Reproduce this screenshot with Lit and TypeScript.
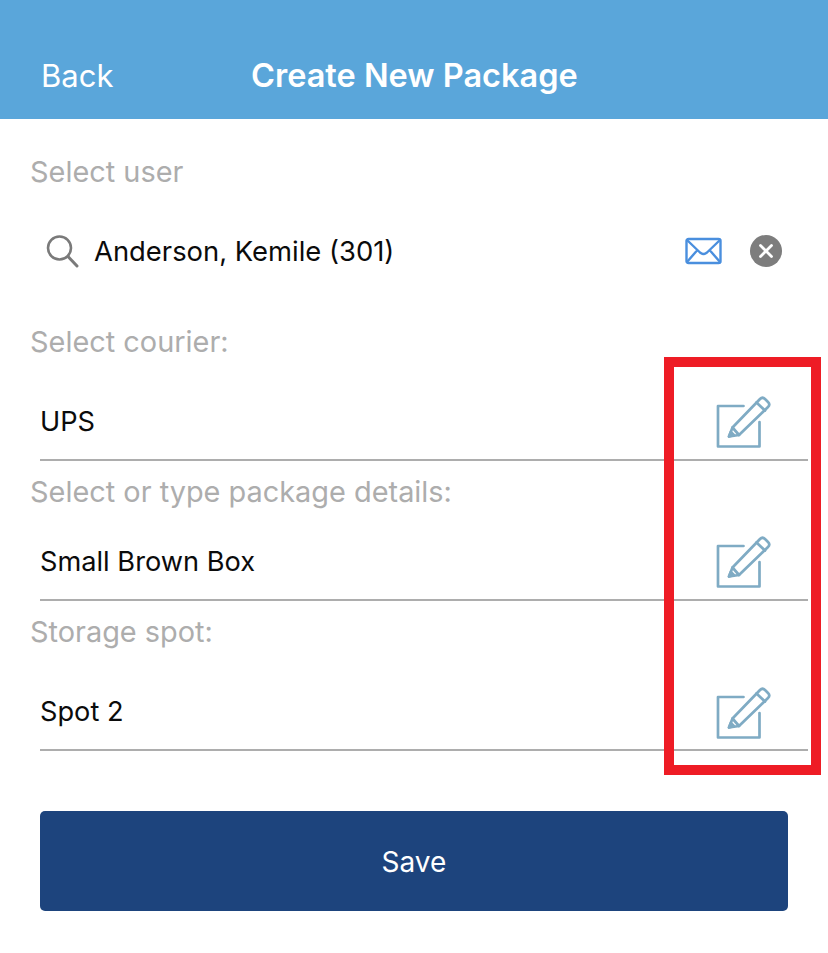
import { LitElement, html, css, svg } from "lit";
import { customElement } from "lit/decorators.js";

const editIcon = (cls = "") => html`<svg class="edit ${cls}" viewBox="0 0 58 55" width="58" height="55" fill="none" stroke="#7fabc4" stroke-width="2.7" stroke-linejoin="round" stroke-linecap="round">
  ${svg`<path d="M28.5 11H3V51.500H44.500V27"/>
  <path d="M14 41.500L17.500 32.500L45 4Q47.500 1.500 50 4L53 7Q55.500 9.500 53 12L24 40Z"/>
  <path d="M41.500 7.500L50 15.500M17.500 32.500L24 40"/>
  <path d="M14 41.500L15.800 37L18.800 40Z" fill="#7fabc4"/>`}
</svg>`;

@customElement("app-root")
export class AppRoot extends LitElement {
  static styles = css`
    :host {
      display: block;
      position: relative;
      width: 828px;
      height: 953px;
      background: #fff;
      font-family: Inter, "Liberation Sans", sans-serif;
      color: #0b0b0b;
      overflow: hidden;
    }
    .header {
      height: 119px;
      background: #5aa6da;
      color: #fff;
      display: flex;
      align-items: center;
      padding: 31px 0 0 41px;
      box-sizing: border-box;
      margin-bottom: 27px;
    }
    .back { font-size: 31px; font-weight: 400; width: 210px; }
    .title { font-size: 32.500px; font-weight: 600; }
    .form { padding: 0 20px 0 30px; }
    .label {
      height: 50px;
      line-height: 52px;
      font-size: 28.900px;
      color: #adadad;
    }
    .user {
      height: 110px;
      display: flex;
      align-items: center;
      font-size: 27.400px;
      margin-bottom: 10px;
      padding-left: 15px;
    }
    .search { margin-right: 16px; }
    .name { flex: 1; margin-left: -1px; }
    .mail { margin-right: 27px; }
    .clear { margin-right: 26px; }
    .field {
      height: 95px;
      margin: 0 0 5px 10px;
      border-bottom: 2px solid #adadad;
      box-sizing: border-box;
      display: flex;
      align-items: flex-end;
      justify-content: space-between;
      font-size: 27.200px;
      line-height: 40px;
    }
    .field.short { height: 85px; }
    .field span { padding-bottom: 17px; }
    .edit { flex: none; margin: 0 35px 9px 0; }
    .edit.near { margin-bottom: 8px; }
    .save {
      display: flex;
      align-items: center;
      justify-content: center;
      height: 100px;
      box-sizing: border-box;
      padding-top: 1px;
      margin: 60px 40px 0;
      border-radius: 5px;
      background: #1d447d;
      color: #fff;
      font-size: 28px;
    }
    .frame {
      position: absolute;
      left: 664px;
      top: 357px;
      width: 157px;
      height: 418px;
      box-sizing: border-box;
      border: 10px solid #ee1c25;
      pointer-events: none;
    }
  `;

  render() {
    return html`
      <div class="header">
        <span class="back">Back</span>
        <span class="title">Create New Package</span>
      </div>
      <div class="form">
        <div class="label">Select user</div>
        <div class="user">
          <svg class="search" width="34" height="34" viewBox="0 0 34 34" fill="none" stroke="#7a7a7a" stroke-width="2.600" stroke-linecap="round">
            <circle cx="14.500" cy="14" r="11.500"/><path d="M23 22.500L32 32" stroke-width="3"/>
          </svg>
          <span class="name">Anderson, Kemile (301)</span>
          <svg class="mail" width="38" height="28" viewBox="0 0 38 28" fill="none" stroke="#4a8fde" stroke-width="2.400" stroke-linejoin="round" stroke-linecap="round">
            <rect x="1.500" y="2" width="34" height="24" rx="2"/>
            <path d="M2 3L15 15.500Q18.500 18.500 22 15.500L35 3M2 25L12 13.500M35 25L25 13.500"/>
          </svg>
          <svg class="clear" width="32" height="32" viewBox="0 0 32 32">
            <circle cx="16" cy="16" r="16" fill="#7d7d7d"/>
            <path d="M10.500 10.500L21.500 21.500M21.500 10.500L10.500 21.500" stroke="#fff" stroke-width="2.800" stroke-linecap="round"/>
          </svg>
        </div>
        <div class="label">Select courier:</div>
        <div class="field"><span>UPS</span>${editIcon()}</div>
        <div class="label">Select or type package details:</div>
        <div class="field short"><span>Small Brown Box</span>${editIcon()}</div>
        <div class="label">Storage spot:</div>
        <div class="field"><span>Spot 2</span>${editIcon("near")}</div>
      </div>
      <div class="save">Save</div>
      <div class="frame"></div>
    `;
  }
}
